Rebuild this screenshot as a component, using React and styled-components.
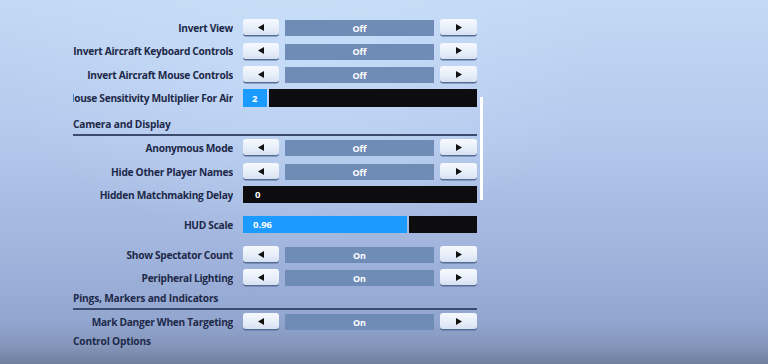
import styled, { createGlobalStyle } from 'styled-components';

const GlobalStyle = createGlobalStyle`
  html, body {
    margin: 0;
    padding: 0;
  }
  body {
    width: 768px;
    height: 364px;
    overflow: hidden;
    font-family: 'Open Sans', 'Noto Sans', sans-serif;
    background:
      radial-gradient(ellipse 420px 260px at 300px 60px, rgba(205, 226, 252, 0.55), rgba(205, 226, 252, 0) 70%),
      linear-gradient(180deg, #c3d9f4 0%, #b5caed 35%, #a3b7df 65%, #93a6d0 88%, #8496ba 95%, #707f9c 100%);
  }
`;

const Screen = styled.div`
  width: 768px;
  height: 364px;
  box-sizing: border-box;
  padding: 19px 0 0 73px;
`;

const Panel = styled.div`
  position: relative;
  width: 404px;
  display: flex;
  flex-direction: column;
`;

const Row = styled.div`
  display: grid;
  grid-template-columns: 160px 234px;
  column-gap: 10px;
  align-items: center;
  height: ${(p) => p.h || 17}px;
  margin-top: ${(p) => p.mt || 0}px;
`;

const Label = styled.div`
  display: flex;
  justify-content: flex-end;
  overflow: hidden;
  white-space: nowrap;
  font-size: 10.2px;
  font-weight: 700;
  letter-spacing: -0.3px;
  color: #1d2949;
`;

const Header = styled.div`
  margin-top: ${(p) => p.mt || 0}px;
  height: 19px;
  line-height: 19px;
  font-size: 10.2px;
  font-weight: 700;
  letter-spacing: -0.2px;
  color: #1d2949;
  border-bottom: ${(p) => (p.line ? '2px solid #3b4a6e' : 'none')};
`;

const Toggle = styled.div`
  display: grid;
  grid-template-columns: 36px 1fr 37px;
  column-gap: 6px;
  height: 17px;
`;

const ArrowButton = styled.div`
  display: flex;
  align-items: center;
  justify-content: center;
  height: 16px;
  border-radius: 3px;
  background: linear-gradient(180deg, #f6f9fe 0%, #e6eef9 60%, #d6e1f0 100%);
  box-shadow: 0 1.5px 0 #566c95;
`;

const Value = styled.div`
  display: flex;
  align-items: center;
  justify-content: center;
  height: 16px;
  margin-top: 1px;
  background: #6f8cb7;
  color: #ffffff;
  font-size: 9px;
  font-weight: 700;
`;

const Slider = styled.div`
  display: flex;
  height: ${(p) => p.h || 17}px;
  gap: 2px;
`;

const Fill = styled.div`
  display: flex;
  align-items: center;
  box-sizing: border-box;
  padding-left: ${(p) => (p.pad ? p.pad : 10)}px;
  background: #1b9bff;
  color: #ffffff;
  font-size: 9.5px;
  font-weight: 700;
`;

const Track = styled.div`
  flex: 1;
  display: flex;
  align-items: center;
  padding-left: 12px;
  background: #0d0d10;
  color: #ffffff;
  font-size: 9.5px;
  font-weight: 700;
`;

const ScrollThumb = styled.div`
  position: absolute;
  left: 407px;
  top: 78px;
  width: 3px;
  height: 103px;
  background: #ffffff;
`;

const Tri = ({ dir }) => (
  <svg width="6" height="7" viewBox="0 0 6 7">
    {dir === 'left' ? (
      <polygon points="6,0 6,7 0,3.5" fill="#111" />
    ) : (
      <polygon points="0,0 0,7 6,3.5" fill="#111" />
    )}
  </svg>
);

const ToggleRow = ({ label, value, mt }) => (
  <Row mt={mt}>
    <Label>{label}</Label>
    <Toggle>
      <ArrowButton>
        <Tri dir="left" />
      </ArrowButton>
      <Value>{value}</Value>
      <ArrowButton>
        <Tri dir="right" />
      </ArrowButton>
    </Toggle>
  </Row>
);

export default function App() {
  return (
    <>
      <GlobalStyle />
      <Screen>
        <Panel>
          <ToggleRow label="Invert View" value="Off" />
          <ToggleRow label="Invert Aircraft Keyboard Controls" value="Off" mt={6.5} />
          <ToggleRow label="Invert Aircraft Mouse Controls" value="Off" mt={6.5} />
          <Row mt={6} h={18}>
            <Label>Mouse Sensitivity Multiplier For Air</Label>
            <Slider h={18}>
              <Fill style={{ width: 24 }} pad={9}>2</Fill>
              <Track />
            </Slider>
          </Row>

          <Header mt={8} line>
            Camera and Display
          </Header>
          <ToggleRow label="Anonymous Mode" value="Off" mt={3} />
          <ToggleRow label="Hide Other Player Names" value="Off" mt={7} />
          <Row mt={6}>
            <Label>Hidden Matchmaking Delay</Label>
            <Slider>
              <Track>0</Track>
            </Slider>
          </Row>
          <Row mt={13}>
            <Label>HUD Scale</Label>
            <Slider>
              <Fill style={{ width: 164 }}>0.96</Fill>
              <Track />
            </Slider>
          </Row>
          <ToggleRow label="Show Spectator Count" value="On" mt={13} />
          <ToggleRow label="Peripheral Lighting" value="On" mt={6} />

          <Header mt={3} line>
            Pings, Markers and Indicators
          </Header>
          <ToggleRow label="Mark Danger When Targeting" value="On" mt={3} />

          <Header mt={2}>Control Options</Header>

          <ScrollThumb />
        </Panel>
      </Screen>
    </>
  );
}
